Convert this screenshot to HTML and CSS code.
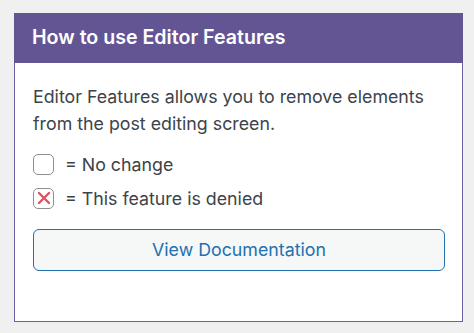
FILE: index.html
```html
<!DOCTYPE html>
<html lang="en">
<head>
    <meta charset="UTF-8">
    <title>How to use Editor Features</title>
    <link rel="stylesheet" href="styles.css">
</head>
<body>
<div class="box">
    <h2 class="box-title">How to use Editor Features</h2>
    <div class="box-body">
        <p class="intro">Editor Features allows you to remove elements from the post editing screen.</p>
        <ul class="legend">
            <li><span class="check"></span>= No change</li>
            <li>
                <span class="check denied">
                    <svg width="14" height="14" viewBox="0 0 14 14"><path d="M2 2 L12 12 M12 2 L2 12" stroke="#e0535f" stroke-width="2.4" stroke-linecap="round"/></svg>
                </span>= This feature is denied
            </li>
        </ul>
        <a class="button" href="#">View Documentation</a>
    </div>
</div>
</body>
</html>
```

FILE: styles.css
```css
* {
    padding: 0;
    margin: 0;
    list-style: none;
    box-sizing: border-box;
}

body {
    background: #f0f0f1;
    font-family: Inter, "Liberation Sans", sans-serif;
    padding: 13px 11px 11px 14px;
}

.box {
    width: 449px;
    height: 309px;
    background: #fff;
    border: 1px solid #6d5fa3;
}

.box-title {
    background: #635594;
    color: #fff;
    font-size: 19.6px;
    font-weight: 600;
    height: 50px;
    line-height: 49px;
    padding-left: 18px;
    margin: -1px -1px 0;
}

.box-body {
    padding: 20px 17px 0 18px;
}

.intro {
    font-size: 17.8px;
    line-height: 27px;
    color: #3c434a;
}

.legend {
    margin-top: 16px;
}

.legend li {
    display: flex;
    align-items: center;
    font-size: 17.8px;
    color: #3c434a;
    height: 22px;
    margin-bottom: 12px;
}

.check {
    width: 21px;
    height: 21px;
    border: 1.5px solid #8c8f94;
    border-radius: 5px;
    margin-right: 11px;
    display: flex;
    align-items: center;
    justify-content: center;
}

.button {
    display: block;
    margin-top: 20px;
    height: 42px;
    line-height: 40px;
    text-align: center;
    border: 1.5px solid #2271b1;
    border-radius: 6px;
    background: #f6f7f7;
    color: #2271b1;
    font-size: 17.8px;
    text-decoration: none;
}
```
